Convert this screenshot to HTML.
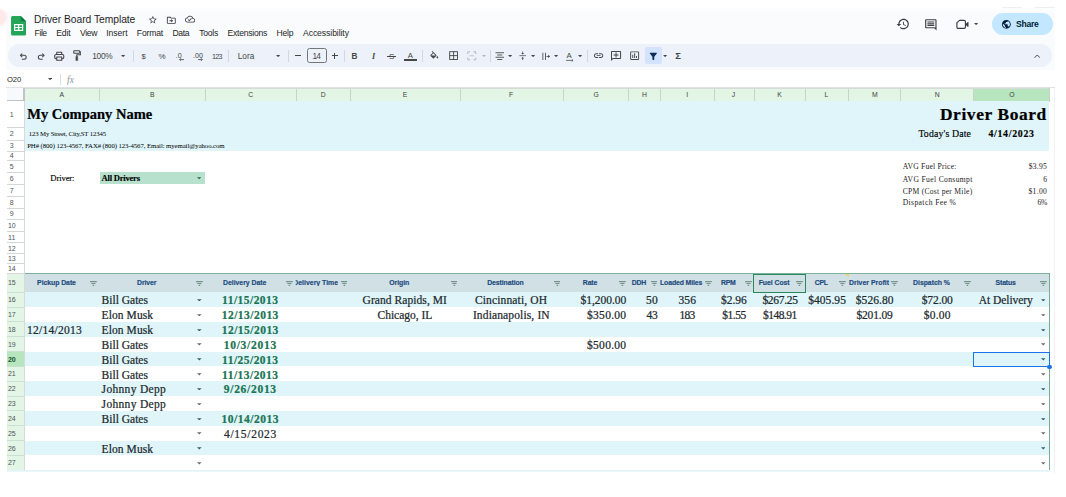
<!DOCTYPE html>
<html lang="en"><head><meta charset="utf-8"><title>Driver Board Template</title>
<style>
html,body{margin:0;padding:0;background:#fff;}
body{width:1066px;height:497px;position:relative;overflow:hidden;font-family:"Liberation Sans",sans-serif;}
.a{position:absolute;display:block;}
.t{white-space:nowrap;}
.s{font-family:"Liberation Serif",serif;}
.k1{-webkit-text-stroke:0.150px currentColor;}
.k2{-webkit-text-stroke:0.220px currentColor;}
.n{font-family:"Liberation Sans",sans-serif;}
</style></head><body>
<div class="a" style="left:6.00px;top:8.00px;width:1049.00px;height:62.00px;background:linear-gradient(#fdfeff,#f9fbfd 6px);"></div>
<div class="a" style="left:-9px;top:8.500px;width:15.500px;height:17px;border-radius:50%;background:#fde9ea;filter:blur(1px)"></div>
<div class="a" style="left:8.00px;top:44.00px;width:1044.00px;height:23.00px;background:#edf2fa;border-radius:11.500px;"></div>
<div class="a" style="left:6.00px;top:69.50px;width:1049.00px;height:18.00px;background:#fff;"></div>
<div class="a" style="left:6.00px;top:87.00px;width:1049.00px;height:0.80px;background:#dfe3e6;"></div>
<svg class="a" style="left:10.8px;top:16px" width="15.2" height="19.800" viewBox="0 0 16 21"><path d="M1.6 0H10.3L16 5.7V19.2A1.6 1.6 0 0 1 14.4 20.8H1.6A1.6 1.6 0 0 1 0 19.2V1.6A1.6 1.6 0 0 1 1.6 0Z" fill="#22a556"/><path d="M10.3 0L16 5.7H11.6A1.3 1.3 0 0 1 10.3 4.4Z" fill="#0e7c43"/><path d="M3.1 8.5h9.8v7.4H3.1Z M4.4 9.800v1.800h2.900v-1.800Z M8.700 9.800v1.800h2.900v-1.800Z M4.400 12.800v1.800h2.900v-1.800Z M8.700 12.800v1.800h2.900v-1.800Z" fill="#fff" fill-rule="evenodd"/></svg>
<svg class="a" style="left:148.20px;top:15.10px" width="9.7" height="9.7" viewBox="0 0 24 24"><path fill="#3a3d3f" d="M22 9.240l-7.190-.620L12 2 9.190 8.630 2 9.240l5.460 4.730L5.820 21 12 17.270 18.180 21l-1.630-7.030L22 9.240zM12 15.400l-3.760 2.270 1-4.280-3.320-2.880 4.380-.380L12 6.100l1.710 4.040 4.380.380-3.320 2.880 1 4.280L12 15.400z"/></svg>
<svg class="a" style="left:166.20px;top:15.00px" width="10.6" height="10.6" viewBox="0 0 24 24"><path fill="#3a3d3f" d="M20 6h-8l-2-2H4c-1.100 0-2 .900-2 2v12c0 1.100.900 2 2 2h16c1.100 0 2-.900 2-2V8c0-1.100-.900-2-2-2zm0 12H4V6h5.170l2 2H20v10zm-8-1l4-4-4-4v3H8v2h4v3z"/></svg>
<svg class="a" style="left:184.50px;top:14.30px" width="10.2" height="10.2" viewBox="0 0 24 24"><path fill="#3a3d3f" d="M19.350 10.040C18.670 6.590 15.640 4 12 4 9.110 4 6.600 5.640 5.350 8.040 2.340 8.360 0 10.910 0 14c0 3.310 2.690 6 6 6h13c2.760 0 5-2.240 5-5 0-2.640-2.050-4.780-4.650-4.960zM19 18H6c-2.210 0-4-1.790-4-4s1.790-4 4-4h.710C7.370 7.690 9.480 6 12 6c3.040 0 5.500 2.460 5.500 5.500v.500H19c1.660 0 3 1.340 3 3s-1.340 3-3 3zm-9-3.820l-2.090-2.090L6.500 13.500 10 17l6.010-6.010-1.410-1.410z"/></svg>
<svg class="a" style="left:896.40px;top:16.70px" width="14" height="14" viewBox="0 0 24 24"><path fill="#3a3d3f" d="M13 3c-4.970 0-9 4.030-9 9H1l3.890 3.890.070.140L9 12H6c0-3.870 3.130-7 7-7s7 3.130 7 7-3.130 7-7 7c-1.930 0-3.680-.790-4.940-2.060l-1.420 1.420C8.270 19.990 10.510 21 13 21c4.970 0 9-4.030 9-9s-4.030-9-9-9zm-1 5v5l4.280 2.540.720-1.210-3.500-2.080V8H12z"/></svg>
<svg class="a" style="left:924.40px;top:17.60px" width="13.7" height="13.7" viewBox="0 0 24 24"><path fill="#3a3d3f" d="M21.990 4c0-1.100-.890-2-1.990-2H4c-1.100 0-2 .900-2 2v12c0 1.100.900 2 2 2h14l4 4-.010-18zM20 4v13.170L18.830 16H4V4h16zM6 12h12v2H6zm0-3h12v2H6zm0-3h12v2H6z"/></svg>
<svg class="a" style="left:956px;top:19px" width="13.500" height="10.800" viewBox="0 0 30 24" fill="none" stroke="#3a3d3f" stroke-width="2.600" stroke-linejoin="round"><path d="M8 3h10a3 3 0 0 1 3 3v12a3 3 0 0 1-3 3H5a3 3 0 0 1-3-3V8z"/><path d="M21 12l6-5v10z" fill="#3a3d3f" stroke-width="1.500"/></svg>
<svg class="a" style="left:974.20px;top:23.10px" width="4.2" height="2.2" viewBox="0 0 10 5"><path d="M0 0h10L5 5z" fill="#444746"/></svg>
<div class="a" style="left:1001.50px;top:6.80px;width:20.50px;height:1.40px;background:#eeeeee;border-radius:1px;filter:blur(0.4px);"></div>
<div class="a" style="left:1034.50px;top:6.80px;width:20.00px;height:1.40px;background:#eeeeee;border-radius:1px;filter:blur(0.4px);"></div>
<div class="a" style="left:991.80px;top:13.00px;width:61.00px;height:22.30px;background:#c2e7ff;border-radius:11.500px;"></div>
<svg class="a" style="left:1001.20px;top:18.60px" width="10.7" height="10.7" viewBox="0 0 24 24"><path fill="#001d35" d="M12 2C6.48 2 2 6.48 2 12s4.48 10 10 10 10-4.48 10-10S17.52 2 12 2zm-1 17.930c-3.950-.490-7-3.850-7-7.930 0-.620.080-1.210.210-1.790L9 15v1c0 1.100.900 2 2 2v1.930zm6.900-2.540c-.260-.810-1-1.390-1.900-1.390h-1v-3c0-.550-.450-1-1-1H8v-2h2c.550 0 1-.450 1-1V7h2c1.100 0 2-.900 2-2v-.410c2.930 1.190 5 4.060 5 7.410 0 2.080-.800 3.970-2.100 5.390z"/></svg>
<div class="a" style="left:132.50px;top:50.00px;width:1.00px;height:12.00px;background:#d3d8e0;"></div>
<div class="a" style="left:227.50px;top:50.00px;width:1.00px;height:12.00px;background:#d3d8e0;"></div>
<div class="a" style="left:287.50px;top:50.00px;width:1.00px;height:12.00px;background:#d3d8e0;"></div>
<div class="a" style="left:343.50px;top:50.00px;width:1.00px;height:12.00px;background:#d3d8e0;"></div>
<div class="a" style="left:421.50px;top:50.00px;width:1.00px;height:12.00px;background:#d3d8e0;"></div>
<div class="a" style="left:489.50px;top:50.00px;width:1.00px;height:12.00px;background:#d3d8e0;"></div>
<div class="a" style="left:586.50px;top:50.00px;width:1.00px;height:12.00px;background:#d3d8e0;"></div>
<svg class="a" style="left:18.800px;top:52px" width="8.500" height="8.500" viewBox="0 0 18 18" fill="none" stroke="#444746" stroke-width="2.200"><path d="M3.500 7h7.500a4.200 4.200 0 0 1 0 8.400H6"/><path d="M6.800 3.200L3 7l3.800 3.800" stroke-linejoin="round"/></svg>
<svg class="a" style="left:37.200px;top:52px" width="8.500" height="8.500" viewBox="0 0 18 18" fill="none" stroke="#444746" stroke-width="2.200"><path d="M14.500 7H7a4.200 4.200 0 0 0 0 8.400h5"/><path d="M11.200 3.200L15 7l-3.800 3.800" stroke-linejoin="round"/></svg>
<svg class="a" style="left:54.400px;top:50.500px" width="10.500" height="10.500" viewBox="0 0 21 21" fill="none" stroke="#444746" stroke-width="2.200" stroke-linejoin="round"><path d="M5.500 7V2.500h10V7"/><rect x="1.500" y="7" width="18" height="8.500" rx="2.500"/><rect x="5.500" y="12" width="10" height="6.500" fill="#edf2fa"/></svg>
<svg class="a" style="left:71.800px;top:50.300px" width="9.500" height="11.500" viewBox="0 0 19 23" fill="none" stroke="#444746" stroke-width="2.200" stroke-linejoin="round"><rect x="3.500" y="1.500" width="12" height="5" rx="1"/><path d="M15.500 4h2v5.500H9.500V13"/><rect x="7.800" y="13" width="3.600" height="8" fill="#444746" stroke-width="1"/></svg>
<svg class="a" style="left:120.60px;top:54.70px" width="4.2" height="2.2" viewBox="0 0 10 5"><path d="M0 0h10L5 5z" fill="#444746"/></svg>
<svg class="a" style="left:178.500px;top:58.300px" width="5" height="3.200" viewBox="0 0 10 6.400" fill="none" stroke="#444746" stroke-width="1.600"><path d="M10 3.200H1.500M4 .5L1.300 3.200 4 5.900"/></svg>
<svg class="a" style="left:197.500px;top:58.300px" width="5" height="3.200" viewBox="0 0 10 6.400" fill="none" stroke="#444746" stroke-width="1.600"><path d="M0 3.200H8.500M6 .5L8.700 3.200 6 5.900"/></svg>
<svg class="a" style="left:275.90px;top:54.70px" width="4.2" height="2.2" viewBox="0 0 10 5"><path d="M0 0h10L5 5z" fill="#444746"/></svg>
<div class="a" style="left:295.20px;top:55.20px;width:5.60px;height:0.90px;background:#444746;"></div>
<div class="a" style="left:306.5px;top:48.400px;width:18.700px;height:13px;border:0.800px solid #747775;border-radius:2.500px;box-sizing:content-box"></div>
<div class="a" style="left:332.00px;top:55.20px;width:5.80px;height:0.90px;background:#444746;"></div>
<div class="a" style="left:334.45px;top:52.75px;width:0.90px;height:5.80px;background:#444746;"></div>
<div class="a" style="left:387.30px;top:55.60px;width:8.40px;height:0.90px;background:#444746;"></div>
<div class="a" style="left:404.30px;top:59.30px;width:12.40px;height:1.50px;background:#444746;"></div>
<svg class="a" style="left:429.10px;top:50.50px" width="10.6" height="10.6" viewBox="0 0 24 24"><path fill="#444746" d="M16.560 8.940L7.620 0 6.210 1.410l2.380 2.380-5.150 5.150c-.590.590-.590 1.540 0 2.120l5.500 5.500c.290.290.680.440 1.060.440s.770-.150 1.060-.440l5.500-5.500c.590-.580.590-1.530 0-2.120zM5.210 10L10 5.210 14.790 10H5.210zM19 11.500s-2 2.170-2 3.500c0 1.100.900 2 2 2s2-.900 2-2c0-1.330-2-3.500-2-3.500z"/></svg>
<svg class="a" style="left:448.800px;top:51.300px" width="9.200" height="9.200" viewBox="0 0 20 20" fill="none" stroke="#444746" stroke-width="2"><rect x="1.500" y="1.500" width="17" height="17"/><path d="M10 1.500v17M1.500 10h17"/></svg>
<svg class="a" style="left:467px;top:51px" width="9.500" height="9.500" viewBox="0 0 19 19" fill="none" stroke="#b4b8bd" stroke-width="2"><path d="M6 1.500H1.500V6M13 1.500h4.500V6M6 17.500H1.500V13M13 17.500h4.500V13"/><path d="M5 9.500h9" stroke-width="1.500"/></svg>
<svg class="a" style="left:481.90px;top:54.80px" width="4.2" height="2.2" viewBox="0 0 10 5"><path d="M0 0h10L5 5z" fill="#b4b8bd"/></svg>
<svg class="a" style="left:495px;top:51.500px" width="9.500" height="8.500" viewBox="0 0 19 17" fill="none" stroke="#444746" stroke-width="1.800"><path d="M1 1.500h17M4.500 6h10M1 10.500h17M4.500 15h10"/></svg>
<svg class="a" style="left:507.90px;top:54.80px" width="4.2" height="2.2" viewBox="0 0 10 5"><path d="M0 0h10L5 5z" fill="#444746"/></svg>
<svg class="a" style="left:519.400px;top:51px" width="7.400" height="9.500" viewBox="0 0 18 21" fill="#444746"><path d="M1 9.600h16v1.800H1z"/><path d="M9 7.500L5.500 3.500h2.600V0h1.800v3.500h2.600zM9 13.500l3.500 4H9.900V21H8.100v-3.500H5.500z"/></svg>
<svg class="a" style="left:531.30px;top:54.80px" width="4.2" height="2.2" viewBox="0 0 10 5"><path d="M0 0h10L5 5z" fill="#444746"/></svg>
<svg class="a" style="left:542px;top:51.500px" width="8.400" height="8.800" viewBox="0 0 19 19" fill="#444746"><path d="M1 1h1.900v17H1zM7 1h1.900v17H7z"/><path d="M10 8.600h4V6l4.500 3.500L14 13v-2.600h-4z"/></svg>
<svg class="a" style="left:554.40px;top:54.80px" width="4.2" height="2.2" viewBox="0 0 10 5"><path d="M0 0h10L5 5z" fill="#444746"/></svg>
<svg class="a" style="left:566px;top:58.800px" width="8" height="2.800" viewBox="0 0 16 5.600" fill="none" stroke="#444746" stroke-width="1.500"><path d="M0 2.800h14M11.500 .5l2.500 2.300-2.500 2.300"/></svg>
<svg class="a" style="left:577.90px;top:54.80px" width="4.2" height="2.2" viewBox="0 0 10 5"><path d="M0 0h10L5 5z" fill="#444746"/></svg>
<svg class="a" style="left:592.60px;top:50.20px" width="11.2" height="11.2" viewBox="0 0 24 24"><path fill="#444746" d="M3.900 12c0-1.710 1.390-3.100 3.100-3.100h4V7H7c-2.760 0-5 2.240-5 5s2.240 5 5 5h4v-1.900H7c-1.710 0-3.100-1.390-3.100-3.100zM8 13h8v-2H8v2zm9-6h-4v1.900h4c1.710 0 3.100 1.390 3.100 3.100s-1.390 3.100-3.100 3.100h-4V17h4c2.760 0 5-2.240 5-5s-2.240-5-5-5z"/></svg>
<svg class="a" style="left:610.30px;top:50.30px" width="12.1" height="12.1" viewBox="0 0 24 24"><path fill="#444746" transform="translate(24 0) scale(-1 1)" d="M22 4c0-1.100-.900-2-2-2H4c-1.100 0-2 .900-2 2v12c0 1.100.900 2 2 2h14l4 4V4zm-2 13.170L18.830 16H4V4h16v13.170zM13 5h-2v4H7v2h4v4h2v-4h4V9h-4z"/></svg>
<svg class="a" style="left:629.10px;top:50.40px" width="11.3" height="11.3" viewBox="0 0 24 24"><path fill="#444746" d="M9 17H7v-7h2v7zm4 0h-2V7h2v10zm4 0h-2v-4h2v4zm2.500 2.100h-15V5h15v14.100zm0-16.100h-15c-1.100 0-2 .900-2 2v14c0 1.100.900 2 2 2h15c1.100 0 2-.900 2-2V5c0-1.100-.900-2-2-2z"/></svg>
<div class="a" style="left:644.50px;top:47.00px;width:17.00px;height:17.00px;background:#d3e3fd;border-radius:2px;"></div>
<svg class="a" style="left:647.90px;top:51.10px" width="10.7" height="10.7" viewBox="0 0 24 24"><path fill="#0b2a55" d="M4.250 5.610C6.270 8.200 10 13 10 13v6c0 .550.450 1 1 1h2c.550 0 1-.450 1-1v-6s3.720-4.800 5.740-7.390A.998.998 0 0 0 18.950 4H5.040c-.830 0-1.300.950-.790 1.610z"/></svg>
<svg class="a" style="left:663.40px;top:54.80px" width="4.2" height="2.2" viewBox="0 0 10 5"><path d="M0 0h10L5 5z" fill="#444746"/></svg>
<svg class="a" style="left:1033.500px;top:54px" width="6.500" height="4.500" viewBox="0 0 13 9" fill="none" stroke="#444746" stroke-width="2"><path d="M1 7.500l5.500-5.500 5.500 5.500"/></svg>
<svg class="a" style="left:48.20px;top:78.40px" width="4.2" height="2.2" viewBox="0 0 10 5"><path d="M0 0h10L5 5z" fill="#444746"/></svg>
<div class="a" style="left:59.50px;top:74.00px;width:1.00px;height:11.00px;background:#dcdfe3;"></div>
<div class="a" style="left:24.50px;top:88.00px;width:1025.00px;height:13.30px;background:#e3f5e4;"></div>
<div class="a" style="left:973.70px;top:88.00px;width:75.80px;height:13.30px;background:#b7e5bd;"></div>
<div class="a" style="left:99.10px;top:88.00px;width:0.80px;height:13.30px;background:#c6d4ca;"></div>
<div class="a" style="left:205.10px;top:88.00px;width:0.80px;height:13.30px;background:#c6d4ca;"></div>
<div class="a" style="left:295.60px;top:88.00px;width:0.80px;height:13.30px;background:#c6d4ca;"></div>
<div class="a" style="left:350.10px;top:88.00px;width:0.80px;height:13.30px;background:#c6d4ca;"></div>
<div class="a" style="left:459.60px;top:88.00px;width:0.80px;height:13.30px;background:#c6d4ca;"></div>
<div class="a" style="left:562.60px;top:88.00px;width:0.80px;height:13.30px;background:#c6d4ca;"></div>
<div class="a" style="left:628.30px;top:88.00px;width:0.80px;height:13.30px;background:#c6d4ca;"></div>
<div class="a" style="left:659.60px;top:88.00px;width:0.80px;height:13.30px;background:#c6d4ca;"></div>
<div class="a" style="left:714.10px;top:88.00px;width:0.80px;height:13.30px;background:#c6d4ca;"></div>
<div class="a" style="left:753.60px;top:88.00px;width:0.80px;height:13.30px;background:#c6d4ca;"></div>
<div class="a" style="left:804.90px;top:88.00px;width:0.80px;height:13.30px;background:#c6d4ca;"></div>
<div class="a" style="left:848.00px;top:88.00px;width:0.80px;height:13.30px;background:#c6d4ca;"></div>
<div class="a" style="left:900.10px;top:88.00px;width:0.80px;height:13.30px;background:#c6d4ca;"></div>
<div class="a" style="left:973.30px;top:88.00px;width:0.80px;height:13.30px;background:#c6d4ca;"></div>
<div class="a" style="left:1049.10px;top:88.00px;width:0.80px;height:13.30px;background:#c6d4ca;"></div>
<div class="a" style="left:24.50px;top:100.80px;width:1025.00px;height:0.80px;background:#c0c9c3;"></div>
<div class="a" style="left:6.80px;top:87.70px;width:1042.70px;height:0.70px;background:#d5dbd7;"></div>
<div class="a" style="left:6.80px;top:88.00px;width:17.70px;height:13.30px;background:#f8f9fa;"></div>
<div class="a" style="left:22.80px;top:88.00px;width:2.20px;height:13.80px;background:#bfc3c6;"></div>
<div class="a" style="left:6.80px;top:99.60px;width:18.00px;height:2.20px;background:#bfc3c6;"></div>
<div class="a" style="left:6.80px;top:101.30px;width:17.80px;height:26.00px;background:#fff;"></div>
<div class="a" style="left:6.80px;top:127.30px;width:17.80px;height:13.00px;background:#fff;"></div>
<div class="a" style="left:6.80px;top:140.30px;width:17.80px;height:10.90px;background:#fff;"></div>
<div class="a" style="left:6.80px;top:151.20px;width:17.80px;height:9.50px;background:#fff;"></div>
<div class="a" style="left:6.80px;top:160.70px;width:17.80px;height:11.30px;background:#fff;"></div>
<div class="a" style="left:6.80px;top:172.00px;width:17.80px;height:12.40px;background:#fff;"></div>
<div class="a" style="left:6.80px;top:184.40px;width:17.80px;height:12.10px;background:#fff;"></div>
<div class="a" style="left:6.80px;top:196.50px;width:17.80px;height:11.70px;background:#fff;"></div>
<div class="a" style="left:6.80px;top:208.20px;width:17.80px;height:11.40px;background:#fff;"></div>
<div class="a" style="left:6.80px;top:219.60px;width:17.80px;height:11.70px;background:#fff;"></div>
<div class="a" style="left:6.80px;top:231.30px;width:17.80px;height:11.50px;background:#fff;"></div>
<div class="a" style="left:6.80px;top:242.80px;width:17.80px;height:10.60px;background:#fff;"></div>
<div class="a" style="left:6.80px;top:253.40px;width:17.80px;height:9.70px;background:#fff;"></div>
<div class="a" style="left:6.80px;top:263.10px;width:17.80px;height:10.30px;background:#fff;"></div>
<div class="a" style="left:6.80px;top:273.40px;width:17.80px;height:18.90px;background:#e3f5e4;"></div>
<div class="a" style="left:6.80px;top:292.30px;width:17.80px;height:14.83px;background:#e3f5e4;"></div>
<div class="a" style="left:6.80px;top:307.13px;width:17.80px;height:14.83px;background:#e3f5e4;"></div>
<div class="a" style="left:6.80px;top:321.96px;width:17.80px;height:14.83px;background:#e3f5e4;"></div>
<div class="a" style="left:6.80px;top:336.79px;width:17.80px;height:14.83px;background:#e3f5e4;"></div>
<div class="a" style="left:6.80px;top:351.62px;width:17.80px;height:14.83px;background:#b7e5bd;"></div>
<div class="a" style="left:6.80px;top:366.45px;width:17.80px;height:14.83px;background:#e3f5e4;"></div>
<div class="a" style="left:6.80px;top:381.28px;width:17.80px;height:14.83px;background:#e3f5e4;"></div>
<div class="a" style="left:6.80px;top:396.11px;width:17.80px;height:14.83px;background:#e3f5e4;"></div>
<div class="a" style="left:6.80px;top:410.94px;width:17.80px;height:14.83px;background:#e3f5e4;"></div>
<div class="a" style="left:6.80px;top:425.77px;width:17.80px;height:14.83px;background:#e3f5e4;"></div>
<div class="a" style="left:6.80px;top:440.60px;width:17.80px;height:14.83px;background:#e3f5e4;"></div>
<div class="a" style="left:6.80px;top:455.43px;width:17.80px;height:14.83px;background:#e3f5e4;"></div>
<div class="a" style="left:6.80px;top:127.00px;width:17.80px;height:1.00px;background:#d3d7d5;"></div>
<div class="a" style="left:6.80px;top:140.00px;width:17.80px;height:1.00px;background:#d3d7d5;"></div>
<div class="a" style="left:6.80px;top:151.00px;width:17.80px;height:1.00px;background:#d3d7d5;"></div>
<div class="a" style="left:6.80px;top:160.00px;width:17.80px;height:1.00px;background:#d3d7d5;"></div>
<div class="a" style="left:6.80px;top:172.00px;width:17.80px;height:1.00px;background:#d3d7d5;"></div>
<div class="a" style="left:6.80px;top:184.00px;width:17.80px;height:1.00px;background:#d3d7d5;"></div>
<div class="a" style="left:6.80px;top:196.00px;width:17.80px;height:1.00px;background:#d3d7d5;"></div>
<div class="a" style="left:6.80px;top:208.00px;width:17.80px;height:1.00px;background:#d3d7d5;"></div>
<div class="a" style="left:6.80px;top:219.00px;width:17.80px;height:1.00px;background:#d3d7d5;"></div>
<div class="a" style="left:6.80px;top:231.00px;width:17.80px;height:1.00px;background:#d3d7d5;"></div>
<div class="a" style="left:6.80px;top:242.00px;width:17.80px;height:1.00px;background:#d3d7d5;"></div>
<div class="a" style="left:6.80px;top:253.00px;width:17.80px;height:1.00px;background:#d3d7d5;"></div>
<div class="a" style="left:6.80px;top:263.00px;width:17.80px;height:1.00px;background:#d3d7d5;"></div>
<div class="a" style="left:6.80px;top:273.00px;width:17.80px;height:1.00px;background:#d3d7d5;"></div>
<div class="a" style="left:6.80px;top:292.00px;width:17.80px;height:1.00px;background:#cbe0d2;"></div>
<div class="a" style="left:6.80px;top:307.00px;width:17.80px;height:1.00px;background:#cbe0d2;"></div>
<div class="a" style="left:6.80px;top:321.00px;width:17.80px;height:1.00px;background:#cbe0d2;"></div>
<div class="a" style="left:6.80px;top:336.00px;width:17.80px;height:1.00px;background:#cbe0d2;"></div>
<div class="a" style="left:6.80px;top:351.00px;width:17.80px;height:1.00px;background:#cbe0d2;"></div>
<div class="a" style="left:6.80px;top:366.00px;width:17.80px;height:1.00px;background:#cbe0d2;"></div>
<div class="a" style="left:6.80px;top:381.00px;width:17.80px;height:1.00px;background:#cbe0d2;"></div>
<div class="a" style="left:6.80px;top:396.00px;width:17.80px;height:1.00px;background:#cbe0d2;"></div>
<div class="a" style="left:6.80px;top:410.00px;width:17.80px;height:1.00px;background:#cbe0d2;"></div>
<div class="a" style="left:6.80px;top:425.00px;width:17.80px;height:1.00px;background:#cbe0d2;"></div>
<div class="a" style="left:6.80px;top:440.00px;width:17.80px;height:1.00px;background:#cbe0d2;"></div>
<div class="a" style="left:6.80px;top:455.00px;width:17.80px;height:1.00px;background:#cbe0d2;"></div>
<div class="a" style="left:6.80px;top:470.00px;width:17.80px;height:1.00px;background:#cbe0d2;"></div>
<div class="a" style="left:24.30px;top:101.30px;width:0.70px;height:368.96px;background:#d5dbd7;"></div>
<div class="a" style="left:25.30px;top:101.30px;width:1024.20px;height:49.90px;background:#dff5fa;"></div>
<div class="a" style="left:99.60px;top:172.40px;width:105.80px;height:12.00px;background:#b7e1cd;"></div>
<svg class="a" style="left:197.10px;top:177.25px" width="4.4" height="2.5" viewBox="0 0 10 5"><path d="M0 0h10L5 5z" fill="#2f5d4a"/></svg>
<div class="a" style="left:25.30px;top:273.40px;width:1024.20px;height:18.90px;background:#d1e0e4;"></div>
<div class="a" style="left:25.00px;top:273.00px;width:1024.50px;height:1.30px;background:#7fb39b;"></div>
<div class="a" style="left:1048.70px;top:273.40px;width:1.30px;height:196.86px;background:#76aa92;"></div>
<div class="a" style="left:25.30px;top:292.30px;width:1023.50px;height:14.83px;background:#dff5fa;"></div>
<div class="a" style="left:25.30px;top:321.96px;width:1023.50px;height:14.83px;background:#dff5fa;"></div>
<div class="a" style="left:25.30px;top:351.62px;width:1023.50px;height:14.83px;background:#dff5fa;"></div>
<div class="a" style="left:25.30px;top:381.28px;width:1023.50px;height:14.83px;background:#dff5fa;"></div>
<div class="a" style="left:25.30px;top:410.94px;width:1023.50px;height:14.83px;background:#dff5fa;"></div>
<div class="a" style="left:25.30px;top:440.60px;width:1023.50px;height:14.83px;background:#dff5fa;"></div>
<div class="a" style="left:6.80px;top:470.26px;width:1042.70px;height:2.00px;background:linear-gradient(#dff3f7,#eef9fb);"></div>
<svg class="a" style="left:90.00px;top:281.00px" width="6.800" height="5.200" viewBox="0 0 13.600 10.400"><path d="M0 .2h13.600v2.400H0zM2.600 3.900h8.400v2.300H2.600zM5.200 7.600h3.200v2.200H5.200z" fill="#76938c"/></svg>
<svg class="a" style="left:195.80px;top:281.00px" width="6.800" height="5.200" viewBox="0 0 13.600 10.400"><path d="M0 .2h13.600v2.400H0zM2.600 3.900h8.400v2.300H2.600zM5.200 7.600h3.200v2.200H5.200z" fill="#76938c"/></svg>
<svg class="a" style="left:286.10px;top:281.00px" width="6.800" height="5.200" viewBox="0 0 13.600 10.400"><path d="M0 .2h13.600v2.400H0zM2.600 3.900h8.400v2.300H2.600zM5.200 7.600h3.200v2.200H5.200z" fill="#76938c"/></svg>
<svg class="a" style="left:340.50px;top:281.00px" width="6.800" height="5.200" viewBox="0 0 13.600 10.400"><path d="M0 .2h13.600v2.400H0zM2.600 3.900h8.400v2.300H2.600zM5.200 7.600h3.200v2.200H5.200z" fill="#76938c"/></svg>
<svg class="a" style="left:450.50px;top:281.00px" width="6.800" height="5.200" viewBox="0 0 13.600 10.400"><path d="M0 .2h13.600v2.400H0zM2.600 3.900h8.400v2.300H2.600zM5.200 7.600h3.200v2.200H5.200z" fill="#76938c"/></svg>
<svg class="a" style="left:553.60px;top:281.00px" width="6.800" height="5.200" viewBox="0 0 13.600 10.400"><path d="M0 .2h13.600v2.400H0zM2.600 3.900h8.400v2.300H2.600zM5.200 7.600h3.200v2.200H5.200z" fill="#76938c"/></svg>
<svg class="a" style="left:618.90px;top:281.00px" width="6.800" height="5.200" viewBox="0 0 13.600 10.400"><path d="M0 .2h13.600v2.400H0zM2.600 3.900h8.400v2.300H2.600zM5.200 7.600h3.200v2.200H5.200z" fill="#76938c"/></svg>
<svg class="a" style="left:650.50px;top:281.00px" width="6.800" height="5.200" viewBox="0 0 13.600 10.400"><path d="M0 .2h13.600v2.400H0zM2.600 3.900h8.400v2.300H2.600zM5.200 7.600h3.200v2.200H5.200z" fill="#76938c"/></svg>
<svg class="a" style="left:704.90px;top:281.00px" width="6.800" height="5.200" viewBox="0 0 13.600 10.400"><path d="M0 .2h13.600v2.400H0zM2.600 3.900h8.400v2.300H2.600zM5.200 7.600h3.200v2.200H5.200z" fill="#76938c"/></svg>
<svg class="a" style="left:744.80px;top:281.00px" width="6.800" height="5.200" viewBox="0 0 13.600 10.400"><path d="M0 .2h13.600v2.400H0zM2.600 3.900h8.400v2.300H2.600zM5.200 7.600h3.200v2.200H5.200z" fill="#76938c"/></svg>
<svg class="a" style="left:796.20px;top:281.00px" width="6.800" height="5.200" viewBox="0 0 13.600 10.400"><path d="M0 .2h13.600v2.400H0zM2.600 3.900h8.400v2.300H2.600zM5.200 7.600h3.200v2.200H5.200z" fill="#76938c"/></svg>
<svg class="a" style="left:839.00px;top:281.00px" width="6.800" height="5.200" viewBox="0 0 13.600 10.400"><path d="M0 .2h13.600v2.400H0zM2.600 3.900h8.400v2.300H2.600zM5.200 7.600h3.200v2.200H5.200z" fill="#76938c"/></svg>
<svg class="a" style="left:891.20px;top:281.00px" width="6.800" height="5.200" viewBox="0 0 13.600 10.400"><path d="M0 .2h13.600v2.400H0zM2.600 3.900h8.400v2.300H2.600zM5.200 7.600h3.200v2.200H5.200z" fill="#76938c"/></svg>
<svg class="a" style="left:964.10px;top:281.00px" width="6.800" height="5.200" viewBox="0 0 13.600 10.400"><path d="M0 .2h13.600v2.400H0zM2.600 3.900h8.400v2.300H2.600zM5.200 7.600h3.200v2.200H5.200z" fill="#76938c"/></svg>
<svg class="a" style="left:1039.80px;top:281.00px" width="6.800" height="5.200" viewBox="0 0 13.600 10.400"><path d="M0 .2h13.600v2.400H0zM2.600 3.900h8.400v2.300H2.600zM5.200 7.600h3.200v2.200H5.200z" fill="#76938c"/></svg>
<div class="a" style="left:753.3px;top:273.500px;width:52.400px;height:19.200px;border:1.400px solid #2a875a;box-sizing:border-box"></div>
<svg class="a" style="left:844.5px;top:273.800px" width="4" height="3.200" viewBox="0 0 5 4"><path d="M0 0h5v4z" fill="#f1d36c"/></svg>
<svg class="a" style="left:197.00px;top:298.90px" width="4.6" height="2.6" viewBox="0 0 10 5"><path d="M0 0h10L5 5z" fill="#2f5d66"/></svg>
<svg class="a" style="left:1040.90px;top:298.90px" width="4.6" height="2.6" viewBox="0 0 10 5"><path d="M0 0h10L5 5z" fill="#2f5d66"/></svg>
<svg class="a" style="left:197.00px;top:313.73px" width="4.6" height="2.6" viewBox="0 0 10 5"><path d="M0 0h10L5 5z" fill="#6d6668"/></svg>
<svg class="a" style="left:1040.90px;top:313.73px" width="4.6" height="2.6" viewBox="0 0 10 5"><path d="M0 0h10L5 5z" fill="#6d6668"/></svg>
<svg class="a" style="left:197.00px;top:328.56px" width="4.6" height="2.6" viewBox="0 0 10 5"><path d="M0 0h10L5 5z" fill="#2f5d66"/></svg>
<svg class="a" style="left:1040.90px;top:328.56px" width="4.6" height="2.6" viewBox="0 0 10 5"><path d="M0 0h10L5 5z" fill="#2f5d66"/></svg>
<svg class="a" style="left:197.00px;top:343.39px" width="4.6" height="2.6" viewBox="0 0 10 5"><path d="M0 0h10L5 5z" fill="#6d6668"/></svg>
<svg class="a" style="left:1040.90px;top:343.39px" width="4.6" height="2.6" viewBox="0 0 10 5"><path d="M0 0h10L5 5z" fill="#6d6668"/></svg>
<svg class="a" style="left:197.00px;top:358.22px" width="4.6" height="2.6" viewBox="0 0 10 5"><path d="M0 0h10L5 5z" fill="#2f5d66"/></svg>
<svg class="a" style="left:1040.90px;top:358.22px" width="4.6" height="2.6" viewBox="0 0 10 5"><path d="M0 0h10L5 5z" fill="#2f5d66"/></svg>
<svg class="a" style="left:197.00px;top:373.05px" width="4.6" height="2.6" viewBox="0 0 10 5"><path d="M0 0h10L5 5z" fill="#6d6668"/></svg>
<svg class="a" style="left:1040.90px;top:373.05px" width="4.6" height="2.6" viewBox="0 0 10 5"><path d="M0 0h10L5 5z" fill="#6d6668"/></svg>
<svg class="a" style="left:197.00px;top:387.88px" width="4.6" height="2.6" viewBox="0 0 10 5"><path d="M0 0h10L5 5z" fill="#2f5d66"/></svg>
<svg class="a" style="left:1040.90px;top:387.88px" width="4.6" height="2.6" viewBox="0 0 10 5"><path d="M0 0h10L5 5z" fill="#2f5d66"/></svg>
<svg class="a" style="left:197.00px;top:402.71px" width="4.6" height="2.6" viewBox="0 0 10 5"><path d="M0 0h10L5 5z" fill="#6d6668"/></svg>
<svg class="a" style="left:1040.90px;top:402.71px" width="4.6" height="2.6" viewBox="0 0 10 5"><path d="M0 0h10L5 5z" fill="#6d6668"/></svg>
<svg class="a" style="left:197.00px;top:417.54px" width="4.6" height="2.6" viewBox="0 0 10 5"><path d="M0 0h10L5 5z" fill="#2f5d66"/></svg>
<svg class="a" style="left:1040.90px;top:417.54px" width="4.6" height="2.6" viewBox="0 0 10 5"><path d="M0 0h10L5 5z" fill="#2f5d66"/></svg>
<svg class="a" style="left:197.00px;top:432.37px" width="4.6" height="2.6" viewBox="0 0 10 5"><path d="M0 0h10L5 5z" fill="#6d6668"/></svg>
<svg class="a" style="left:1040.90px;top:432.37px" width="4.6" height="2.6" viewBox="0 0 10 5"><path d="M0 0h10L5 5z" fill="#6d6668"/></svg>
<svg class="a" style="left:197.00px;top:447.20px" width="4.6" height="2.6" viewBox="0 0 10 5"><path d="M0 0h10L5 5z" fill="#2f5d66"/></svg>
<svg class="a" style="left:1040.90px;top:447.20px" width="4.6" height="2.6" viewBox="0 0 10 5"><path d="M0 0h10L5 5z" fill="#2f5d66"/></svg>
<svg class="a" style="left:197.00px;top:462.03px" width="4.6" height="2.6" viewBox="0 0 10 5"><path d="M0 0h10L5 5z" fill="#6d6668"/></svg>
<svg class="a" style="left:1040.90px;top:462.03px" width="4.6" height="2.6" viewBox="0 0 10 5"><path d="M0 0h10L5 5z" fill="#6d6668"/></svg>
<div class="a" style="left:973.2px;top:351.500px;width:76.600px;height:15.600px;border:1.300px solid #1a73e8;box-sizing:border-box"></div>
<div class="a" style="left:1047.3px;top:364.600px;width:4.600px;height:4.600px;border-radius:50%;background:#1a73e8"></div>
<div class="a" style="left:1054.00px;top:88.00px;width:1.00px;height:386.26px;background:#f0f2f3;"></div>
<div class="a t n" style="left:34.00px;top:14px;height:11px;line-height:11px;font-size:10.3px;color:#1f1f1f;letter-spacing:-0.045px;">Driver Board Template</div>
<div class="a t n" style="left:34.60px;top:28px;height:10px;line-height:10px;font-size:8.6px;color:#1f1f1f;letter-spacing:-0.437px;">File</div>
<div class="a t n" style="left:56.30px;top:28px;height:10px;line-height:10px;font-size:8.6px;color:#1f1f1f;letter-spacing:-0.177px;">Edit</div>
<div class="a t n" style="left:80.00px;top:28px;height:10px;line-height:10px;font-size:8.6px;color:#1f1f1f;letter-spacing:-0.368px;">View</div>
<div class="a t n" style="left:106.20px;top:28px;height:10px;line-height:10px;font-size:8.6px;color:#1f1f1f;letter-spacing:-0.015px;">Insert</div>
<div class="a t n" style="left:136.80px;top:28px;height:10px;line-height:10px;font-size:8.6px;color:#1f1f1f;letter-spacing:-0.169px;">Format</div>
<div class="a t n" style="left:172.40px;top:28px;height:10px;line-height:10px;font-size:8.6px;color:#1f1f1f;letter-spacing:-0.363px;">Data</div>
<div class="a t n" style="left:199.20px;top:28px;height:10px;line-height:10px;font-size:8.6px;color:#1f1f1f;letter-spacing:-0.232px;">Tools</div>
<div class="a t n" style="left:227.60px;top:28px;height:10px;line-height:10px;font-size:8.6px;color:#1f1f1f;letter-spacing:-0.264px;">Extensions</div>
<div class="a t n" style="left:276.50px;top:28px;height:10px;line-height:10px;font-size:8.6px;color:#1f1f1f;letter-spacing:-0.244px;">Help</div>
<div class="a t n" style="left:303.00px;top:28px;height:10px;line-height:10px;font-size:8.6px;color:#1f1f1f;letter-spacing:-0.069px;">Accessibility</div>
<div class="a t n" style="left:1016.00px;top:19px;height:10px;line-height:10px;font-size:8.6px;color:#001d35;letter-spacing:-0.277px;font-weight:bold;">Share</div>
<div class="a t n" style="left:92.20px;top:51px;height:10px;line-height:10px;font-size:8.3px;color:#444746;letter-spacing:-0.255px;">100%</div>
<div class="a t n" style="left:141.40px;top:52px;height:9px;line-height:9px;font-size:7.6px;color:#444746;letter-spacing:-0.323px;">$</div>
<div class="a t n" style="left:158.40px;top:52px;height:9px;line-height:9px;font-size:8px;color:#444746;letter-spacing:-0.513px;">%</div>
<div class="a t n" style="left:175.50px;top:51px;height:9px;line-height:9px;font-size:7.2px;color:#444746;letter-spacing:0.253px;">.0</div>
<div class="a t n" style="left:193.00px;top:51px;height:9px;line-height:9px;font-size:7.2px;color:#444746;letter-spacing:0.003px;">.00</div>
<div class="a t n" style="left:212.00px;top:52px;height:9px;line-height:9px;font-size:7.2px;color:#444746;letter-spacing:-0.731px;">123</div>
<div class="a t n" style="left:237.80px;top:51px;height:10px;line-height:10px;font-size:8.3px;color:#444746;letter-spacing:-0.051px;">Lora</div>
<div class="a t n" style="left:312.40px;top:51px;height:10px;line-height:10px;font-size:8.3px;color:#444746;letter-spacing:-0.664px;">14</div>
<div class="a t n" style="left:351.50px;top:52px;height:9px;line-height:9px;font-size:8.2px;color:#444746;letter-spacing:-0.113px;font-weight:bold;">B</div>
<div class="a t s" style="left:372.00px;top:52px;height:9px;line-height:9px;font-size:8.2px;color:#444746;letter-spacing:-0.186px;font-weight:bold;font-style:italic;">I</div>
<div class="a t n" style="left:389.00px;top:52px;height:9px;line-height:9px;font-size:8px;color:#444746;letter-spacing:-0.336px;">S</div>
<div class="a t n" style="left:407.70px;top:51px;height:9px;line-height:9px;font-size:7.8px;color:#444746;letter-spacing:0.100px;">A</div>
<div class="a t n" style="left:566.60px;top:51px;height:9px;line-height:9px;font-size:7.8px;color:#444746;letter-spacing:0.500px;">A</div>
<div class="a t n" style="left:675.30px;top:50px;height:11px;line-height:11px;font-size:9.5px;color:#444746;letter-spacing:0.299px;font-weight:bold;">Σ</div>
<div class="a t n" style="left:7.00px;top:75px;height:9px;line-height:9px;font-size:7.7px;color:#1f1f1f;letter-spacing:-0.110px;">O20</div>
<div class="a t s" style="left:67.00px;top:75px;height:10px;line-height:10px;font-size:9.5px;color:#8f959b;letter-spacing:0.222px;font-style:italic;">fx</div>
<div class="a t n" style="left:59.60px;top:91px;height:7px;line-height:7px;font-size:6.8px;color:#3c4043;letter-spacing:0.267px;">A</div>
<div class="a t n" style="left:150.10px;top:91px;height:7px;line-height:7px;font-size:6.8px;color:#3c4043;letter-spacing:0.267px;">B</div>
<div class="a t n" style="left:248.35px;top:91px;height:7px;line-height:7px;font-size:6.8px;color:#3c4043;letter-spacing:-0.108px;">C</div>
<div class="a t n" style="left:320.85px;top:91px;height:7px;line-height:7px;font-size:6.8px;color:#3c4043;letter-spacing:-0.108px;">D</div>
<div class="a t n" style="left:402.85px;top:91px;height:7px;line-height:7px;font-size:6.8px;color:#3c4043;letter-spacing:0.267px;">E</div>
<div class="a t n" style="left:509.10px;top:91px;height:7px;line-height:7px;font-size:6.8px;color:#3c4043;letter-spacing:0.648px;">F</div>
<div class="a t n" style="left:593.45px;top:91px;height:7px;line-height:7px;font-size:6.8px;color:#3c4043;letter-spacing:-0.487px;">G</div>
<div class="a t n" style="left:641.95px;top:91px;height:7px;line-height:7px;font-size:6.8px;color:#3c4043;letter-spacing:-0.108px;">H</div>
<div class="a t n" style="left:686.15px;top:91px;height:7px;line-height:7px;font-size:6.8px;color:#3c4043;letter-spacing:0.312px;">I</div>
<div class="a t n" style="left:731.85px;top:91px;height:7px;line-height:7px;font-size:6.8px;color:#3c4043;letter-spacing:1.402px;">J</div>
<div class="a t n" style="left:777.25px;top:91px;height:7px;line-height:7px;font-size:6.8px;color:#3c4043;letter-spacing:0.267px;">K</div>
<div class="a t n" style="left:824.45px;top:91px;height:7px;line-height:7px;font-size:6.8px;color:#3c4043;letter-spacing:1.020px;">L</div>
<div class="a t n" style="left:872.05px;top:91px;height:7px;line-height:7px;font-size:6.8px;color:#3c4043;letter-spacing:-0.862px;">M</div>
<div class="a t n" style="left:934.70px;top:91px;height:7px;line-height:7px;font-size:6.8px;color:#3c4043;letter-spacing:-0.108px;">N</div>
<div class="a t n" style="left:1009.20px;top:91px;height:7px;line-height:7px;font-size:6.8px;color:#3c4043;letter-spacing:-0.487px;">O</div>
<div class="a t n" style="left:9.85px;top:111px;height:7px;line-height:7px;font-size:7px;color:#50565b;letter-spacing:0.007px;">1</div>
<div class="a t n" style="left:9.85px;top:130px;height:7px;line-height:7px;font-size:7px;color:#50565b;letter-spacing:0.007px;">2</div>
<div class="a t n" style="left:9.85px;top:142px;height:7px;line-height:7px;font-size:7px;color:#50565b;letter-spacing:0.007px;">3</div>
<div class="a t n" style="left:9.85px;top:152px;height:7px;line-height:7px;font-size:7px;color:#50565b;letter-spacing:0.007px;">4</div>
<div class="a t n" style="left:9.85px;top:163px;height:7px;line-height:7px;font-size:7px;color:#50565b;letter-spacing:0.007px;">5</div>
<div class="a t n" style="left:9.85px;top:175px;height:7px;line-height:7px;font-size:7px;color:#50565b;letter-spacing:0.007px;">6</div>
<div class="a t n" style="left:9.85px;top:187px;height:7px;line-height:7px;font-size:7px;color:#50565b;letter-spacing:0.007px;">7</div>
<div class="a t n" style="left:9.85px;top:199px;height:7px;line-height:7px;font-size:7px;color:#50565b;letter-spacing:0.007px;">8</div>
<div class="a t n" style="left:9.85px;top:210px;height:7px;line-height:7px;font-size:7px;color:#50565b;letter-spacing:0.007px;">9</div>
<div class="a t n" style="left:8.00px;top:222px;height:7px;line-height:7px;font-size:7px;color:#50565b;letter-spacing:-0.093px;">10</div>
<div class="a t n" style="left:8.00px;top:234px;height:7px;line-height:7px;font-size:7px;color:#50565b;letter-spacing:0.167px;">11</div>
<div class="a t n" style="left:8.00px;top:245px;height:7px;line-height:7px;font-size:7px;color:#50565b;letter-spacing:-0.093px;">12</div>
<div class="a t n" style="left:8.00px;top:255px;height:7px;line-height:7px;font-size:7px;color:#50565b;letter-spacing:-0.093px;">13</div>
<div class="a t n" style="left:8.00px;top:265px;height:7px;line-height:7px;font-size:7px;color:#50565b;letter-spacing:-0.093px;">14</div>
<div class="a t n" style="left:8.00px;top:279px;height:7px;line-height:7px;font-size:7px;color:#50565b;letter-spacing:-0.093px;">15</div>
<div class="a t n" style="left:8.00px;top:296px;height:7px;line-height:7px;font-size:7px;color:#50565b;letter-spacing:-0.093px;">16</div>
<div class="a t n" style="left:8.00px;top:311px;height:7px;line-height:7px;font-size:7px;color:#50565b;letter-spacing:-0.093px;">17</div>
<div class="a t n" style="left:8.00px;top:326px;height:7px;line-height:7px;font-size:7px;color:#50565b;letter-spacing:-0.093px;">18</div>
<div class="a t n" style="left:8.00px;top:341px;height:7px;line-height:7px;font-size:7px;color:#50565b;letter-spacing:-0.093px;">19</div>
<div class="a t n" style="left:8.00px;top:356px;height:7px;line-height:7px;font-size:7px;color:#14532d;letter-spacing:-0.093px;font-weight:bold;">20</div>
<div class="a t n" style="left:8.00px;top:370px;height:7px;line-height:7px;font-size:7px;color:#50565b;letter-spacing:-0.093px;">21</div>
<div class="a t n" style="left:8.00px;top:385px;height:7px;line-height:7px;font-size:7px;color:#50565b;letter-spacing:-0.093px;">22</div>
<div class="a t n" style="left:8.00px;top:400px;height:7px;line-height:7px;font-size:7px;color:#50565b;letter-spacing:-0.093px;">23</div>
<div class="a t n" style="left:8.00px;top:415px;height:7px;line-height:7px;font-size:7px;color:#50565b;letter-spacing:-0.093px;">24</div>
<div class="a t n" style="left:8.00px;top:430px;height:7px;line-height:7px;font-size:7px;color:#50565b;letter-spacing:-0.093px;">25</div>
<div class="a t n" style="left:8.00px;top:445px;height:7px;line-height:7px;font-size:7px;color:#50565b;letter-spacing:-0.093px;">26</div>
<div class="a t n" style="left:8.00px;top:459px;height:7px;line-height:7px;font-size:7px;color:#50565b;letter-spacing:-0.093px;">27</div>
<div class="a t s k2" style="left:27.20px;top:106px;height:16px;line-height:16px;font-size:14.5px;color:#000;letter-spacing:0.017px;font-weight:bold;">My Company Name</div>
<div class="a t s" style="left:28.80px;top:130px;height:7px;line-height:7px;font-size:6.8px;color:#000;letter-spacing:-0.167px;">123 My Street, City,ST 12345</div>
<div class="a t s" style="left:27.20px;top:142px;height:7px;line-height:7px;font-size:6.8px;color:#000;letter-spacing:-0.097px;">PH# (800) 123-4567, FAX# (800) 123-4567, Email: myemail@yahoo.com</div>
<div class="a t s k2" style="left:939.90px;top:104px;height:20px;line-height:20px;font-size:17.4px;color:#000;letter-spacing:0.611px;font-weight:bold;">Driver Board</div>
<div class="a t s k1" style="left:918.40px;top:128px;height:11px;line-height:11px;font-size:9.8px;color:#000;letter-spacing:0.153px;">Today's Date</div>
<div class="a t s k1" style="left:988.40px;top:128px;height:11px;line-height:11px;font-size:9.8px;color:#000;letter-spacing:0.730px;font-weight:bold;">4/14/2023</div>
<div class="a t s k1" style="left:50.30px;top:173px;height:10px;line-height:10px;font-size:8.6px;color:#000;letter-spacing:-0.102px;">Driver:</div>
<div class="a t s k1" style="left:101.60px;top:173px;height:10px;line-height:10px;font-size:8.6px;color:#000;letter-spacing:-0.237px;font-weight:bold;">All Drivers</div>
<div class="a t s" style="left:902.70px;top:162px;height:9px;line-height:9px;font-size:7.6px;color:#222;letter-spacing:0.228px;">AVG Fuel Price:</div>
<div class="a t s" style="left:1028.70px;top:162px;height:9px;line-height:9px;font-size:7.6px;color:#222;letter-spacing:0.283px;">$3.95</div>
<div class="a t s" style="left:902.70px;top:175px;height:9px;line-height:9px;font-size:7.6px;color:#222;letter-spacing:0.353px;">AVG Fuel Consumpt</div>
<div class="a t s" style="left:1043.30px;top:175px;height:9px;line-height:9px;font-size:7.6px;color:#222;letter-spacing:0.103px;">6</div>
<div class="a t s" style="left:902.70px;top:187px;height:9px;line-height:9px;font-size:7.6px;color:#222;letter-spacing:0.265px;">CPM (Cost per Mile)</div>
<div class="a t s" style="left:1028.50px;top:187px;height:9px;line-height:9px;font-size:7.6px;color:#222;letter-spacing:0.323px;">$1.00</div>
<div class="a t s" style="left:902.70px;top:198px;height:9px;line-height:9px;font-size:7.6px;color:#222;letter-spacing:0.394px;">Dispatch Fee %</div>
<div class="a t s" style="left:1037.50px;top:198px;height:9px;line-height:9px;font-size:7.6px;color:#222;letter-spacing:-0.211px;">6%</div>
<div class="a t n k1" style="left:37.10px;top:279px;height:7px;line-height:7px;font-size:6.9px;color:#1c4a7e;letter-spacing:-0.058px;font-weight:bold;">Pickup Date</div>
<div class="a t n k1" style="left:137.10px;top:279px;height:7px;line-height:7px;font-size:6.9px;color:#1c4a7e;letter-spacing:-0.136px;font-weight:bold;">Driver</div>
<div class="a t n k1" style="left:223.00px;top:279px;height:7px;line-height:7px;font-size:6.9px;color:#1c4a7e;letter-spacing:-0.028px;font-weight:bold;">Delivery Date</div>
<div class="a t n k1" style="left:293.30px;top:279px;height:7px;line-height:7px;font-size:6.9px;color:#1c4a7e;letter-spacing:0.009px;font-weight:bold;clip-path:inset(0 0 0 2.40px);">Delivery Time</div>
<div class="a t n k1" style="left:389.20px;top:279px;height:7px;line-height:7px;font-size:6.9px;color:#1c4a7e;letter-spacing:-0.031px;font-weight:bold;">Origin</div>
<div class="a t n k1" style="left:487.20px;top:279px;height:7px;line-height:7px;font-size:6.9px;color:#1c4a7e;letter-spacing:-0.093px;font-weight:bold;">Destination</div>
<div class="a t n k1" style="left:582.80px;top:279px;height:7px;line-height:7px;font-size:6.9px;color:#1c4a7e;letter-spacing:-0.134px;font-weight:bold;">Rate</div>
<div class="a t n k1" style="left:631.80px;top:279px;height:7px;line-height:7px;font-size:6.9px;color:#1c4a7e;letter-spacing:-0.310px;font-weight:bold;">DDH</div>
<div class="a t n k1" style="left:660.00px;top:279px;height:7px;line-height:7px;font-size:6.9px;color:#1c4a7e;letter-spacing:-0.121px;font-weight:bold;">Loaded Miles</div>
<div class="a t n k1" style="left:721.10px;top:279px;height:7px;line-height:7px;font-size:6.9px;color:#1c4a7e;letter-spacing:-0.337px;font-weight:bold;">RPM</div>
<div class="a t n k1" style="left:758.70px;top:279px;height:7px;line-height:7px;font-size:6.9px;color:#1c4a7e;letter-spacing:-0.055px;font-weight:bold;">Fuel Cost</div>
<div class="a t n k1" style="left:814.70px;top:279px;height:7px;line-height:7px;font-size:6.9px;color:#1c4a7e;letter-spacing:-0.260px;font-weight:bold;">CPL</div>
<div class="a t n k1" style="left:849.00px;top:279px;height:7px;line-height:7px;font-size:6.9px;color:#1c4a7e;letter-spacing:0.014px;font-weight:bold;">Driver Profit</div>
<div class="a t n k1" style="left:913.10px;top:279px;height:7px;line-height:7px;font-size:6.9px;color:#1c4a7e;letter-spacing:-0.044px;font-weight:bold;">Dispatch %</div>
<div class="a t n k1" style="left:995.60px;top:279px;height:7px;line-height:7px;font-size:6.9px;color:#1c4a7e;letter-spacing:-0.160px;font-weight:bold;">Status</div>
<div class="a t s k2" style="left:101.60px;top:294px;height:12px;line-height:12px;font-size:11.5px;color:#20282c;letter-spacing:-0.001px;">Bill Gates</div>
<div class="a t s k2" style="left:101.60px;top:309px;height:12px;line-height:12px;font-size:11.5px;color:#20282c;letter-spacing:0.078px;">Elon Musk</div>
<div class="a t s k2" style="left:101.60px;top:324px;height:12px;line-height:12px;font-size:11.5px;color:#20282c;letter-spacing:0.078px;">Elon Musk</div>
<div class="a t s k2" style="left:101.60px;top:339px;height:12px;line-height:12px;font-size:11.5px;color:#20282c;letter-spacing:-0.001px;">Bill Gates</div>
<div class="a t s k2" style="left:101.60px;top:354px;height:12px;line-height:12px;font-size:11.5px;color:#20282c;letter-spacing:-0.001px;">Bill Gates</div>
<div class="a t s k2" style="left:101.60px;top:369px;height:12px;line-height:12px;font-size:11.5px;color:#20282c;letter-spacing:-0.001px;">Bill Gates</div>
<div class="a t s k2" style="left:101.60px;top:383px;height:12px;line-height:12px;font-size:11.5px;color:#20282c;letter-spacing:0.317px;">Johnny Depp</div>
<div class="a t s k2" style="left:101.60px;top:398px;height:12px;line-height:12px;font-size:11.5px;color:#20282c;letter-spacing:0.317px;">Johnny Depp</div>
<div class="a t s k2" style="left:101.60px;top:413px;height:12px;line-height:12px;font-size:11.5px;color:#20282c;letter-spacing:-0.001px;">Bill Gates</div>
<div class="a t s k2" style="left:101.60px;top:443px;height:12px;line-height:12px;font-size:11.5px;color:#20282c;letter-spacing:0.078px;">Elon Musk</div>
<div class="a t s k2" style="left:222.10px;top:294px;height:12px;line-height:12px;font-size:11.5px;color:#1b7454;letter-spacing:0.464px;font-weight:bold;">11/15/2013</div>
<div class="a t s k2" style="left:221.80px;top:309px;height:12px;line-height:12px;font-size:11.5px;color:#1b7454;letter-spacing:0.461px;font-weight:bold;">12/13/2013</div>
<div class="a t s k2" style="left:221.80px;top:324px;height:12px;line-height:12px;font-size:11.5px;color:#1b7454;letter-spacing:0.461px;font-weight:bold;">12/15/2013</div>
<div class="a t s k2" style="left:223.75px;top:339px;height:12px;line-height:12px;font-size:11.5px;color:#1b7454;letter-spacing:0.718px;font-weight:bold;">10/3/2013</div>
<div class="a t s k2" style="left:222.10px;top:354px;height:12px;line-height:12px;font-size:11.5px;color:#1b7454;letter-spacing:0.464px;font-weight:bold;">11/25/2013</div>
<div class="a t s k2" style="left:222.10px;top:369px;height:12px;line-height:12px;font-size:11.5px;color:#1b7454;letter-spacing:0.464px;font-weight:bold;">11/13/2013</div>
<div class="a t s k2" style="left:223.80px;top:383px;height:12px;line-height:12px;font-size:11.5px;color:#1b7454;letter-spacing:0.707px;font-weight:bold;">9/26/2013</div>
<div class="a t s k2" style="left:221.55px;top:413px;height:12px;line-height:12px;font-size:11.5px;color:#1b7454;letter-spacing:0.511px;font-weight:bold;">10/14/2013</div>
<div class="a t s k2" style="left:224.00px;top:428px;height:12px;line-height:12px;font-size:11.5px;color:#20282c;letter-spacing:0.707px;">4/15/2023</div>
<div class="a t s k2" style="left:27.00px;top:324px;height:12px;line-height:12px;font-size:11.5px;color:#20282c;letter-spacing:0.261px;">12/14/2013</div>
<div class="a t s k2" style="left:362.50px;top:294px;height:12px;line-height:12px;font-size:11.5px;color:#20282c;letter-spacing:0.071px;">Grand Rapids, MI</div>
<div class="a t s k2" style="left:474.90px;top:294px;height:12px;line-height:12px;font-size:11.5px;color:#20282c;letter-spacing:0.145px;">Cincinnati, OH</div>
<div class="a t s k2" style="left:377.50px;top:309px;height:12px;line-height:12px;font-size:11.5px;color:#20282c;letter-spacing:-0.003px;">Chicago, IL</div>
<div class="a t s k2" style="left:472.90px;top:309px;height:12px;line-height:12px;font-size:11.5px;color:#20282c;letter-spacing:0.135px;">Indianapolis, IN</div>
<div class="a t s k2" style="left:580.50px;top:294px;height:12px;line-height:12px;font-size:11.5px;color:#20282c;letter-spacing:-0.022px;">$1,200.00</div>
<div class="a t s k2" style="left:587.10px;top:309px;height:12px;line-height:12px;font-size:11.5px;color:#20282c;letter-spacing:0.261px;">$350.00</div>
<div class="a t s k2" style="left:587.10px;top:339px;height:12px;line-height:12px;font-size:11.5px;color:#20282c;letter-spacing:0.261px;">$500.00</div>
<div class="a t s k2" style="left:646.00px;top:294px;height:12px;line-height:12px;font-size:11.5px;color:#20282c;letter-spacing:0.250px;">50</div>
<div class="a t s k2" style="left:646.40px;top:309px;height:12px;line-height:12px;font-size:11.5px;color:#20282c;letter-spacing:-0.150px;">43</div>
<div class="a t s k2" style="left:678.50px;top:294px;height:12px;line-height:12px;font-size:11.5px;color:#20282c;letter-spacing:0.083px;">356</div>
<div class="a t s k2" style="left:679.50px;top:309px;height:12px;line-height:12px;font-size:11.5px;color:#20282c;letter-spacing:-0.717px;">183</div>
<div class="a t s k2" style="left:721.00px;top:294px;height:12px;line-height:12px;font-size:11.5px;color:#20282c;letter-spacing:-0.015px;">$2.96</div>
<div class="a t s k2" style="left:722.30px;top:309px;height:12px;line-height:12px;font-size:11.5px;color:#20282c;letter-spacing:-0.475px;">$1.55</div>
<div class="a t s k2" style="left:762.40px;top:294px;height:12px;line-height:12px;font-size:11.5px;color:#20282c;letter-spacing:-0.282px;">$267.25</div>
<div class="a t s k2" style="left:763.00px;top:309px;height:12px;line-height:12px;font-size:11.5px;color:#20282c;letter-spacing:-0.539px;">$148.91</div>
<div class="a t s k2" style="left:808.20px;top:294px;height:12px;line-height:12px;font-size:11.5px;color:#20282c;letter-spacing:0.061px;">$405.95</div>
<div class="a t s k2" style="left:855.80px;top:294px;height:12px;line-height:12px;font-size:11.5px;color:#20282c;letter-spacing:0.061px;">$526.80</div>
<div class="a t s k2" style="left:856.40px;top:309px;height:12px;line-height:12px;font-size:11.5px;color:#20282c;letter-spacing:-0.168px;">$201.09</div>
<div class="a t s k2" style="left:921.70px;top:294px;height:12px;line-height:12px;font-size:11.5px;color:#20282c;letter-spacing:-0.088px;">$72.00</div>
<div class="a t s k2" style="left:923.70px;top:309px;height:12px;line-height:12px;font-size:11.5px;color:#20282c;letter-spacing:0.245px;">$0.00</div>
<div class="a t s k2" style="left:978.80px;top:294px;height:12px;line-height:12px;font-size:11.5px;color:#20282c;letter-spacing:-0.064px;">At Delivery</div>
</body></html>
